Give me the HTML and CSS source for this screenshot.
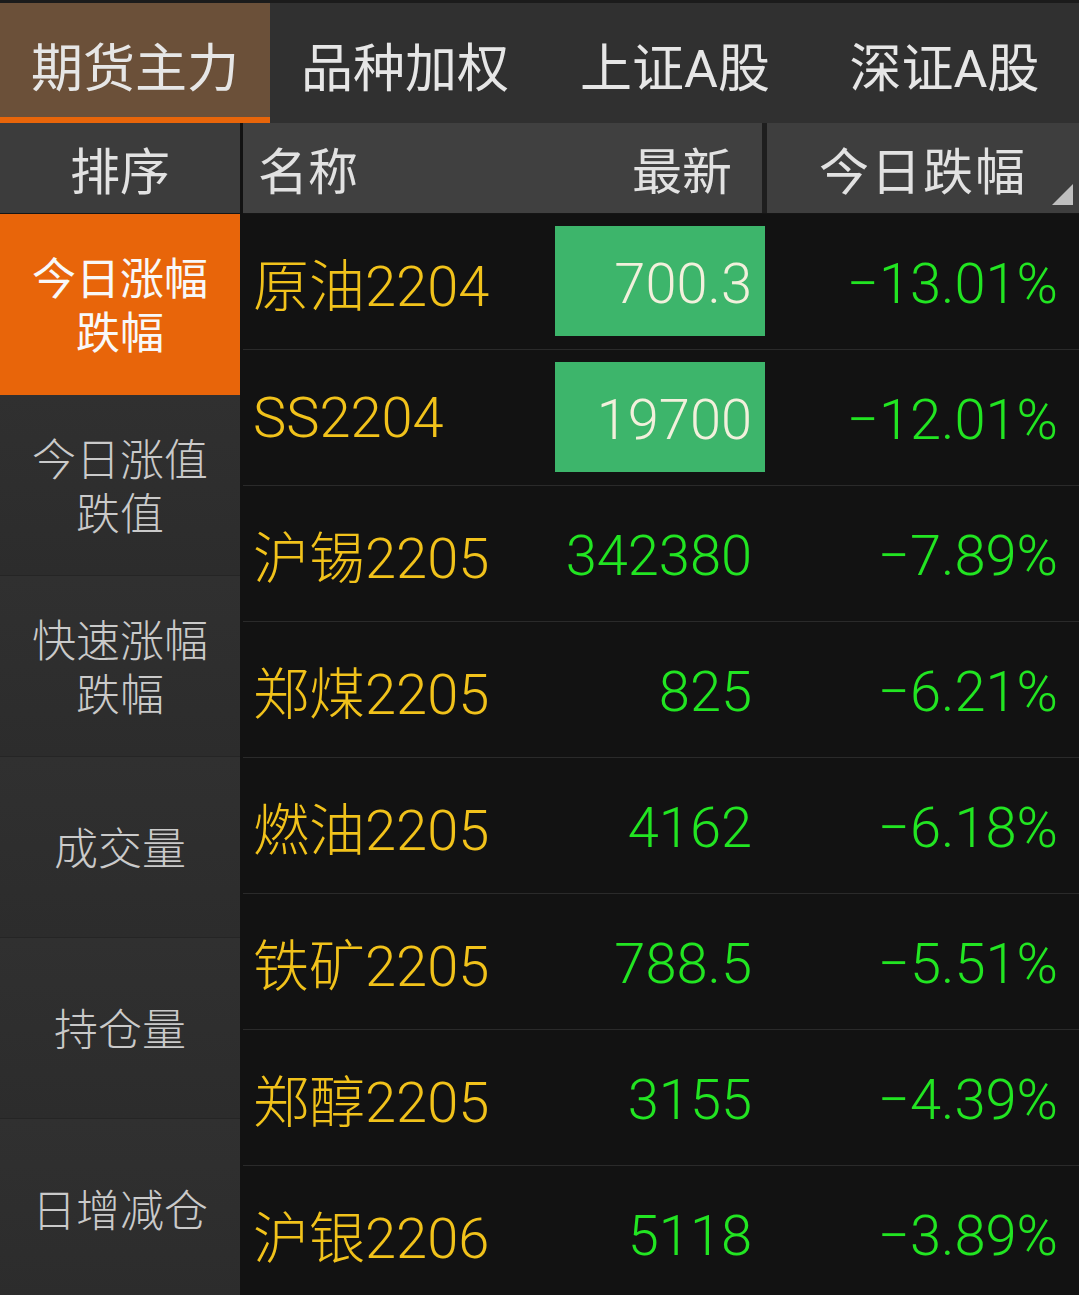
FILE: index.html
```html
<!DOCTYPE html>
<html lang="zh-CN">
<head>
<meta charset="utf-8">
<title>期货主力</title>
<link rel="stylesheet" href="styles.css">
</head>
<body>
<div class="app">
  <nav class="tabs">
    <div class="tab active">期货主力</div>
    <div class="tab">品种加权</div>
    <div class="tab">上证A股</div>
    <div class="tab">深证A股</div>
  </nav>
  <div class="main">
    <aside class="side">
      <div class="side-head">排序</div>
      <div class="side-item active"><span>今日涨幅</span><span>跌幅</span></div>
      <div class="side-item"><span>今日涨值</span><span>跌值</span></div>
      <div class="side-item"><span>快速涨幅</span><span>跌幅</span></div>
      <div class="side-item"><span>成交量</span></div>
      <div class="side-item"><span>持仓量</span></div>
      <div class="side-item"><span>日增减仓</span></div>
    </aside>
    <section class="table">
      <div class="thead">
        <div class="th th-name"><span>名称</span><span>最新</span></div>
        <div class="th th-pct">今日跌幅<span class="sort"></span></div>
      </div>
      <div class="row"><div class="name">原油2204</div><div class="price flash"><span>700.3</span></div><div class="pct">−13.01%</div></div>
      <div class="row"><div class="name">SS2204</div><div class="price flash"><span>19700</span></div><div class="pct">−12.01%</div></div>
      <div class="row"><div class="name">沪锡2205</div><div class="price"><span>342380</span></div><div class="pct">−7.89%</div></div>
      <div class="row"><div class="name">郑煤2205</div><div class="price"><span>825</span></div><div class="pct">−6.21%</div></div>
      <div class="row"><div class="name">燃油2205</div><div class="price"><span>4162</span></div><div class="pct">−6.18%</div></div>
      <div class="row"><div class="name">铁矿2205</div><div class="price"><span>788.5</span></div><div class="pct">−5.51%</div></div>
      <div class="row"><div class="name">郑醇2205</div><div class="price"><span>3155</span></div><div class="pct">−4.39%</div></div>
      <div class="row"><div class="name">沪银2206</div><div class="price"><span>5118</span></div><div class="pct">−3.89%</div></div>
    </section>
  </div>
</div>
</body>
</html>
```
FILE: styles.css
```css
* { box-sizing: border-box; }
html, body { margin: 0; padding: 0; background: #121212; }
body { font-family: "Roboto", "Noto Sans CJK SC", sans-serif; }

.app {
  width: 1079px;
  height: 1295px;
  overflow: hidden;
  background: #121212;
}

.tabs {
  display: flex;
  height: 123px;
  background: #303030;
  border-top: 3px solid #1b1b1b;
}
.tab {
  flex: 0 0 270px;
  display: flex;
  align-items: center;
  justify-content: center;
  padding-top: 8px;
  font-size: 52px;
  font-weight: 400;
  color: #e6e6e6;
  border-bottom: 6px solid transparent;
}
.tab:last-child { flex: 1; }
.tab.active {
  background: #6b5039;
  border-bottom-color: #e8650a;
}

.main {
  display: flex;
  align-items: flex-start;
}

.side {
  flex: 0 0 240px;
  background: #2d2d2d;
}
.side-head {
  height: 91px;
  display: flex;
  align-items: center;
  justify-content: center;
  background: #3c3c3c;
  border-bottom: 1px solid #151515;
  font-size: 50px;
  color: #e2e2e2;
}
.side-item {
  height: 181px;
  display: flex;
  flex-direction: column;
  align-items: center;
  justify-content: center;
  padding-top: 5px;
  font-size: 44px;
  line-height: 54px;
  font-weight: 300;
  color: #cacaca;
  border-bottom: 1px solid #252525;
  background: linear-gradient(#303030, #2c2c2c);
}
.side-item.active {
  background: #e8650a;
  color: #f8f8f8;
  font-weight: 400;
  border-bottom-color: #e8650a;
}

.table {
  flex: 1;
  margin-left: 3px;
  background: #121212;
}
.thead {
  display: flex;
  gap: 5px;
  height: 91px;
  background: #1e1e1e;
  border-bottom: 1px solid #151515;
}
.th {
  display: flex;
  align-items: center;
  background: #404040;
  font-size: 50px;
  color: #e2e2e2;
}
.th-name {
  flex: 0 0 519px;
  justify-content: space-between;
  padding: 0 30px 0 15px;
}
.th-pct {
  flex: 1;
  justify-content: center;
  position: relative;
  background: #3e3e3e;
  letter-spacing: 2px;
}
.sort {
  position: absolute;
  right: 6px;
  bottom: 8px;
  width: 21px;
  height: 21px;
  background: #bfbfbf;
  clip-path: polygon(100% 0, 100% 100%, 0 100%);
}

.row {
  display: grid;
  grid-template-columns: 312px 210px 1fr;
  height: 136px;
  border-bottom: 1px solid #2a2a2a;
  font-size: 56px;
  font-weight: 300;
}
.name {
  display: flex;
  align-items: center;
  padding-left: 10px;
  color: #f1c21b;
}
.price {
  display: flex;
  align-items: center;
  justify-content: flex-end;
  padding: 17px 13px 13px 0;
  color: #22e522;
}
.price.flash {
  background: #3db56b;
  background-clip: content-box;
  padding: 12px 0 13px 0;
  color: #f2f0dc;
}
.price.flash span { padding-right: 13px; padding-top: 5px; }
.pct {
  display: flex;
  align-items: center;
  justify-content: flex-end;
  padding: 5px 21px 0 0;
  color: #22e522;
}
```
